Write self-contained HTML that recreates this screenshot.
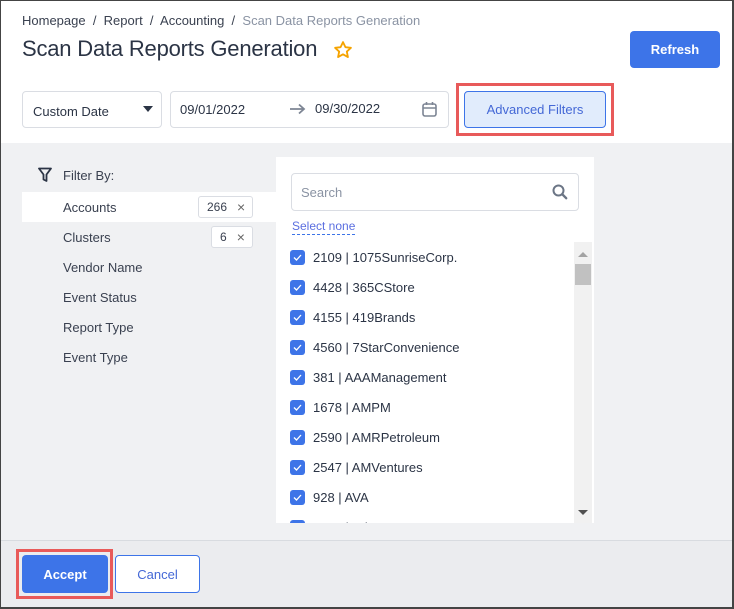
<!DOCTYPE html>
<html><head><style>
*{box-sizing:border-box;margin:0;padding:0}
body{width:734px;height:609px;font-family:"Liberation Sans",sans-serif;background:#fff;position:relative;overflow:hidden;color:#2b3445}
.frame{position:absolute;left:0;top:0;width:734px;height:609px;border:1px solid #444;border-bottom:2px solid #444;border-right:2px solid #444;pointer-events:none;z-index:10}
.abs{position:absolute}
.bc{left:22px;top:13px;font-size:13px;color:#3a4150}
.bc span.g{color:#8a93a3}
h1{position:absolute;left:22px;top:36px;font-size:22px;font-weight:normal;color:#2b3445;letter-spacing:-0.2px;white-space:nowrap}
.btn{position:absolute;border-radius:4px;font-size:13px;display:flex;align-items:center;justify-content:center}
.input{position:absolute;border:1px solid #dadde3;border-radius:4px;background:#fff;font-size:13px;color:#2b3445}
.gray{left:1px;top:143px;width:732px;height:397px;background:#f0f1f3}
.foot{left:1px;top:540px;width:732px;height:67px;background:#ebecef;border-top:1px solid #d8dbe0}
.fl{font-size:13px;color:#3a4150;left:63px}
.badge{position:absolute;background:#fff;border:1px solid #dadde3;border-radius:3px;font-size:12px;color:#3a4150;height:22px;display:flex;align-items:center;padding-left:8px}
.row{position:absolute;left:290px;font-size:13px;color:#2b3445;display:flex;align-items:center;white-space:nowrap}
.cb{width:15px;height:15px;background:#3d74e8;border-radius:3px;margin-right:8px;display:flex;align-items:center;justify-content:center;flex:none}
</style></head><body>
<div class="abs bc">Homepage &nbsp;/&nbsp; Report &nbsp;/&nbsp; Accounting &nbsp;/&nbsp; <span class="g">Scan Data Reports Generation</span></div>
<h1>Scan Data Reports Generation</h1>
<svg class="abs" style="left:333px;top:40px" width="20" height="20" viewBox="0 0 24 24"><path d="M12 2.5l2.9 6.1 6.6.8-4.9 4.5 1.3 6.6L12 17.2l-5.9 3.3 1.3-6.6-4.9-4.5 6.6-.8z" fill="none" stroke="#f5a300" stroke-width="2.2" stroke-linejoin="round"/></svg>
<div class="btn" style="left:630px;top:31px;width:90px;height:37px;background:#3d74e8;color:#fff;font-weight:bold">Refresh</div>
<div class="input" style="left:22px;top:91px;width:140px;height:37px;padding:12px 10px">Custom Date</div>
<div class="abs" style="left:143px;top:106px;width:0;height:0;border-left:5px solid transparent;border-right:5px solid transparent;border-top:6px solid #2b3445"></div>
<div class="input" style="left:170px;top:91px;width:279px;height:37px;padding:10px 9px">09/01/2022</div>
<svg class="abs" style="left:290px;top:103px" width="16" height="12" viewBox="0 0 16 12"><path d="M0 6h14M9 1.5L14 6 9 10.5" fill="none" stroke="#7d8594" stroke-width="1.8"/></svg>
<div class="abs" style="left:315px;top:101px;font-size:13px">09/30/2022</div>
<svg class="abs" style="left:422px;top:101px" width="15" height="16" viewBox="0 0 15 16"><rect x="1" y="3" width="13" height="12" rx="2" fill="none" stroke="#7d8594" stroke-width="1.6"/><path d="M1 7h13M4.5 1v3M10.5 1v3" stroke="#7d8594" stroke-width="1.6"/></svg>
<div class="abs" style="left:456px;top:83px;width:158px;height:53px;border:3px solid #e85a5a"></div>
<div class="btn" style="left:464px;top:91px;width:142px;height:37px;background:#e1ecfc;border:1px solid #3d74e8;color:#4468d6">Advanced Filters</div>

<div class="abs gray"></div>
<svg class="abs" style="left:38px;top:167px" width="14" height="16" viewBox="0 0 14 16"><path d="M1 1.5h12L8.5 7.5V14L5.5 12.5V7.5z" fill="none" stroke="#2b3445" stroke-width="1.8" stroke-linejoin="round"/></svg>
<div class="abs fl" style="top:168px">Filter By:</div>
<div class="abs" style="left:22px;top:192px;width:254px;height:30px;background:#fff"></div>
<div class="abs fl" style="top:200px">Accounts</div>
<div class="badge" style="left:198px;top:196px;width:55px">266<span style="margin-left:10px;color:#666;font-size:14px">×</span></div>
<div class="abs fl" style="top:230px">Clusters</div>
<div class="badge" style="left:211px;top:226px;width:42px">6<span style="margin-left:10px;color:#666;font-size:14px">×</span></div>
<div class="abs fl" style="top:260px">Vendor Name</div>
<div class="abs fl" style="top:290px">Event Status</div>
<div class="abs fl" style="top:320px">Report Type</div>
<div class="abs fl" style="top:350px">Event Type</div>

<div class="abs" style="left:276px;top:157px;width:318px;height:366px;background:#fff"></div>
<div class="input" style="left:291px;top:173px;width:288px;height:38px;padding:11px 9px;color:#8a93a3">Search</div>
<svg class="abs" style="left:552px;top:184px" width="16" height="16" viewBox="0 0 16 16"><circle cx="6.5" cy="6.5" r="5" fill="none" stroke="#6b7585" stroke-width="2"/><path d="M10.2 10.2l4 4" stroke="#6b7585" stroke-width="2.4" stroke-linecap="round"/></svg>
<div class="abs" style="left:292px;top:219px;font-size:12px;color:#5a6ee0;border-bottom:1px dashed #3d74e8;padding-bottom:1px">Select none</div>
<div class="abs" style="left:574px;top:242px;width:18px;height:281px;background:#f1f1f1"></div>
<div class="abs" style="left:578px;top:252px;border-left:5px solid transparent;border-right:5px solid transparent;border-bottom:5px solid #a3a3a3"></div>
<div class="abs" style="left:575px;top:264px;width:16px;height:21px;background:#c1c1c1"></div>
<div class="abs" style="left:578px;top:510px;border-left:5px solid transparent;border-right:5px solid transparent;border-top:5px solid #505050"></div>
<div class="abs" style="left:276px;top:242px;width:298px;height:281px;overflow:hidden">
<div style="position:absolute;left:-276px;top:-242px;width:600px;height:600px">
<div class="row" style="top:250px"><div class="cb"><svg width="9" height="7"><path d="M1 3.5l2.5 2.5L8 1" fill="none" stroke="#fff" stroke-width="1.3"/></svg></div>2109 | 1075SunriseCorp.</div>
<div class="row" style="top:280px"><div class="cb"><svg width="9" height="7"><path d="M1 3.5l2.5 2.5L8 1" fill="none" stroke="#fff" stroke-width="1.3"/></svg></div>4428 | 365CStore</div>
<div class="row" style="top:310px"><div class="cb"><svg width="9" height="7"><path d="M1 3.5l2.5 2.5L8 1" fill="none" stroke="#fff" stroke-width="1.3"/></svg></div>4155 | 419Brands</div>
<div class="row" style="top:340px"><div class="cb"><svg width="9" height="7"><path d="M1 3.5l2.5 2.5L8 1" fill="none" stroke="#fff" stroke-width="1.3"/></svg></div>4560 | 7StarConvenience</div>
<div class="row" style="top:370px"><div class="cb"><svg width="9" height="7"><path d="M1 3.5l2.5 2.5L8 1" fill="none" stroke="#fff" stroke-width="1.3"/></svg></div>381 | AAAManagement</div>
<div class="row" style="top:400px"><div class="cb"><svg width="9" height="7"><path d="M1 3.5l2.5 2.5L8 1" fill="none" stroke="#fff" stroke-width="1.3"/></svg></div>1678 | AMPM</div>
<div class="row" style="top:430px"><div class="cb"><svg width="9" height="7"><path d="M1 3.5l2.5 2.5L8 1" fill="none" stroke="#fff" stroke-width="1.3"/></svg></div>2590 | AMRPetroleum</div>
<div class="row" style="top:460px"><div class="cb"><svg width="9" height="7"><path d="M1 3.5l2.5 2.5L8 1" fill="none" stroke="#fff" stroke-width="1.3"/></svg></div>2547 | AMVentures</div>
<div class="row" style="top:490px"><div class="cb"><svg width="9" height="7"><path d="M1 3.5l2.5 2.5L8 1" fill="none" stroke="#fff" stroke-width="1.3"/></svg></div>928 | AVA</div>
<div class="row" style="top:520px"><div class="cb"></div>3433 | AdamMart</div>
</div></div>

<div class="abs foot"></div>
<div class="abs" style="left:16px;top:549px;width:97px;height:50px;border:3px solid #e85a5a"></div>
<div class="btn" style="left:22px;top:555px;width:86px;height:38px;background:#3d74e8;color:#fff;font-weight:bold">Accept</div>
<div class="btn" style="left:115px;top:555px;width:85px;height:38px;background:#fff;border:1px solid #3d74e8;color:#4468d6">Cancel</div>
<div class="frame"></div>
</body></html>
